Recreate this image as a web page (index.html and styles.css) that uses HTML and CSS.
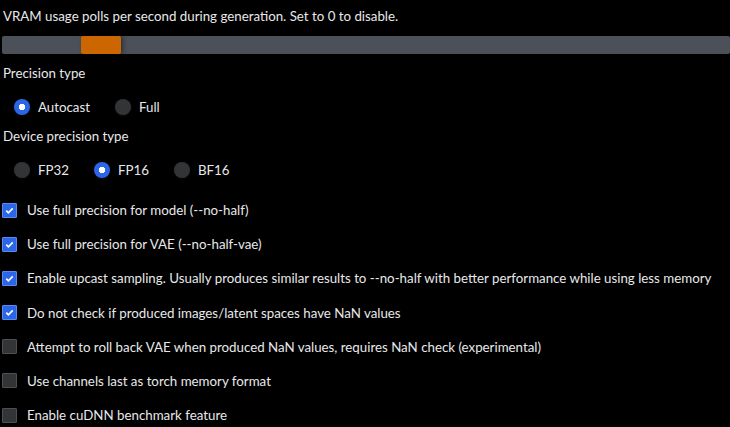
FILE: index.html
```html
<!DOCTYPE html>
<html lang="en">
<head>
    <meta charset="UTF-8">
    <title>Settings</title>
    <link rel="stylesheet" href="styles.css">
</head>
<body>

<div class="settings">
    <div class="slider-block">
        <span class="label">VRAM usage polls per second during generation. Set to 0 to disable.</span>
        <div class="slider">
            <div class="slider-thumb"></div>
        </div>
    </div>

    <div class="radio-block">
        <span class="label">Precision type</span>
        <div class="radio-group">
            <label class="radio checked"><span class="dot"></span>Autocast</label>
            <label class="radio"><span class="dot"></span>Full</label>
        </div>
    </div>

    <div class="radio-block">
        <span class="label">Device precision type</span>
        <div class="radio-group">
            <label class="radio"><span class="dot"></span>FP32</label>
            <label class="radio checked"><span class="dot"></span>FP16</label>
            <label class="radio"><span class="dot"></span>BF16</label>
        </div>
    </div>

    <div class="checks">
        <label class="check checked"><span class="box"></span>Use full precision for model (--no-half)</label>
        <label class="check checked"><span class="box"></span>Use full precision for VAE (--no-half-vae)</label>
        <label class="check checked"><span class="box"></span>Enable upcast sampling. Usually produces similar results to --no-half with better performance while using less memory</label>
        <label class="check checked"><span class="box"></span>Do not check if produced images/latent spaces have NaN values</label>
        <label class="check"><span class="box"></span>Attempt to roll back VAE when produced NaN values, requires NaN check (experimental)</label>
        <label class="check"><span class="box"></span>Use channels last as torch memory format</label>
        <label class="check"><span class="box"></span>Enable cuDNN benchmark feature</label>
    </div>
</div>

</body>
</html>
```

FILE: styles.css
```css
body {
    margin: 0;
    padding: 0;
    background-color: #000;
    color: #e8e8ea;
    font-family: Lato, "Noto Sans", sans-serif;
    font-size: 13.3px;
}

.settings {
    padding: 7px 0 0 2px;
}

.label {
    display: block;
    padding-left: 1px;
    line-height: 18px;
}

.slider {
    margin-top: 11px;
    height: 18px;
    background-color: #4b5059;
    border-radius: 2px;
}

.slider-thumb {
    margin-left: 79px;
    width: 40px;
    height: 18px;
    background-color: #cc6600;
    border-radius: 2px;
    box-shadow: 2px 0 4px rgba(0, 0, 0, 0.4);
}

.radio-block {
    margin-top: 10px;
}

.radio-group {
    display: flex;
    gap: 25px;
    padding: 16px 0 1px 12px;
}

.radio {
    display: flex;
    align-items: center;
    gap: 8px;
    line-height: 18px;
}

.radio .dot {
    width: 16px;
    height: 16px;
    border-radius: 50%;
    background-color: #333436;
    box-shadow: 0 1px 3px rgba(255, 255, 255, 0.06);
}

.radio.checked .dot {
    background-color: #2c66e8;
    background-image: radial-gradient(circle, #fff 0 3px, transparent 3.5px);
}

.checks {
    display: flex;
    flex-direction: column;
    gap: 16.2px;
    margin-top: 21px;
}

.check {
    display: flex;
    align-items: center;
    gap: 10px;
    line-height: 18px;
}

.check .box {
    flex: none;
    width: 15px;
    height: 15px;
    box-sizing: border-box;
    border: 1px solid #4e4f53;
    background-color: #333436;
    border-radius: 1px;
}

.check.checked .box {
    background-color: #2c66e8;
    border-color: #5a8af0;
    background-image: url("data:image/svg+xml,%3Csvg xmlns='http://www.w3.org/2000/svg' viewBox='0 0 16 16'%3E%3Cpath d='M4 8.2l2.6 2.6L12 5.4' fill='none' stroke='white' stroke-width='2'/%3E%3C/svg%3E");
    background-size: 100%;
}
```
